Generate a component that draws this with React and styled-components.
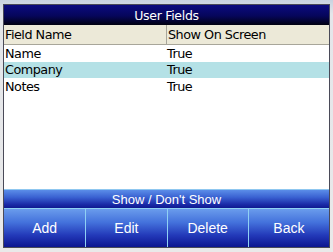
import styled, { createGlobalStyle } from "styled-components";

const GlobalStyle = createGlobalStyle`
  html, body {
    margin: 0;
    padding: 0;
    width: 333px;
    height: 252px;
    overflow: hidden;
    background: linear-gradient(180deg, #c9d3e0 0px, #e4e6ea 14px, #e9e9e9 100%);
  }
`;

const Screen = styled.div`
  width: 333px;
  height: 252px;
  box-sizing: border-box;
  padding: 4px 3px 4px 3px;
`;

const Panel = styled.div`
  height: 100%;
  display: flex;
  flex-direction: column;
  border: 1px solid #4a4a58;
  box-sizing: border-box;
  background: #fff;
  font-family: "DejaVu Sans", Verdana, sans-serif;
`;

const TitleBar = styled.div`
  height: 20px;
  display: flex;
  align-items: center;
  justify-content: center;
  background: linear-gradient(180deg, #0b0b80 0%, #06065a 55%, #000010 100%);
  color: #fff;
  font-size: 12.5px;
  letter-spacing: -0.3px;
`;

const Table = styled.div`
  flex: 1;
  display: flex;
  flex-direction: column;
`;

const Row = styled.div`
  display: grid;
  grid-template-columns: 162px 1fr;
  height: 16.5px;
  align-items: center;
  font-size: 12.8px;
  letter-spacing: -0.5px;
  color: #000;
  background: ${({ $selected }) => ($selected ? "#b4e1e6" : "#fff")};
`;

const HeaderRow = styled(Row)`
  height: 19px;
  background: #ece9d8;
  border-bottom: 1px solid #a8a69a;
`;

const Cell = styled.div`
  padding-left: 1px;
  height: 100%;
  display: flex;
  align-items: center;
  white-space: nowrap;
  border-left: ${({ $divider }) => ($divider ? "1px solid #a8a69a" : "none")};
`;

const ActionBar = styled.div`
  height: 18px;
  display: flex;
  align-items: center;
  justify-content: center;
  background: linear-gradient(180deg, #5b8de8 0%, #3a62d2 40%, #1a2aa8 80%, #0e1890 100%);
  border-top: 1px solid #8fc7f0;
  color: #fff;
  font-family: "Liberation Sans", Arial, sans-serif;
  font-size: 13px;
`;

const ButtonRow = styled.div`
  height: 38px;
  display: grid;
  grid-template-columns: repeat(4, 1fr);
  border-top: 1px solid #8fd0f4;
`;

const Button = styled.button`
  all: unset;
  display: flex;
  align-items: center;
  justify-content: center;
  background: linear-gradient(180deg, #6a9cec 0%, #4472dc 35%, #2238b8 70%, #0c1590 100%);
  border-left: ${({ $first }) => ($first ? "none" : "1px solid #8fd0f4")};
  color: #fff;
  font-family: "Liberation Sans", Arial, sans-serif;
  font-size: 14px;
`;

const fields = [
  { name: "Name", show: "True" },
  { name: "Company", show: "True", selected: true },
  { name: "Notes", show: "True" },
];

export default function App() {
  return (
    <>
      <GlobalStyle />
      <Screen>
        <Panel>
          <TitleBar>User Fields</TitleBar>
          <Table>
            <HeaderRow>
              <Cell>Field Name</Cell>
              <Cell $divider>Show On Screen</Cell>
            </HeaderRow>
            {fields.map((f) => (
              <Row key={f.name} $selected={f.selected}>
                <Cell>{f.name}</Cell>
                <Cell>{f.show}</Cell>
              </Row>
            ))}
          </Table>
          <ActionBar>Show / Don't Show</ActionBar>
          <ButtonRow>
            {["Add", "Edit", "Delete", "Back"].map((b, i) => (
              <Button key={b} $first={i === 0}>
                {b}
              </Button>
            ))}
          </ButtonRow>
        </Panel>
      </Screen>
    </>
  );
}
